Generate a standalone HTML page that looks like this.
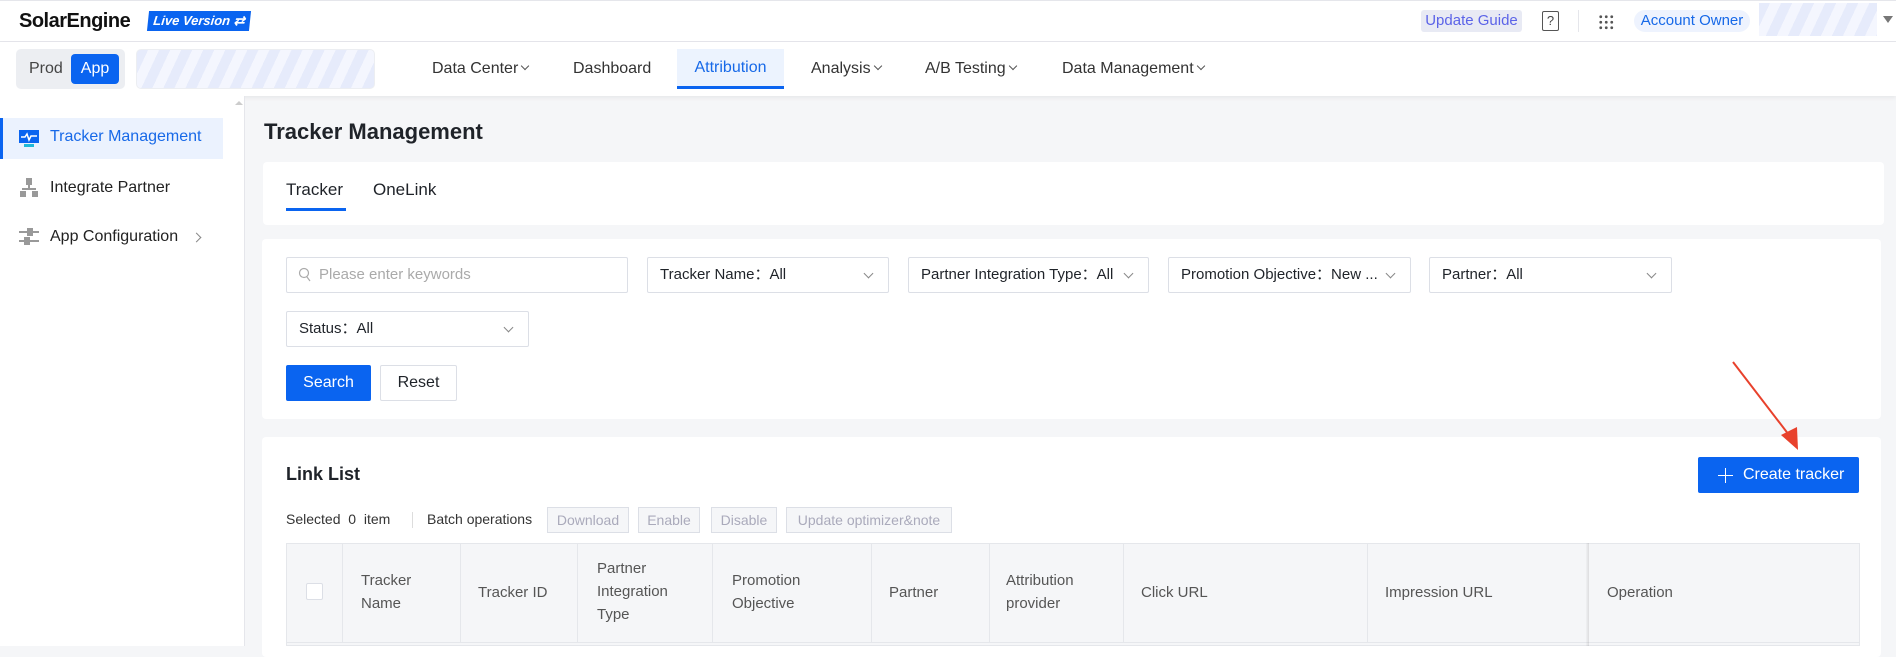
<!DOCTYPE html>
<html><head><meta charset="utf-8"><style>
*{box-sizing:border-box;margin:0;padding:0}
body{width:1896px;height:646px;overflow:hidden;background:#f5f6f8;font-family:"Liberation Sans",sans-serif;color:#1f2329;position:relative}
.a{position:absolute}
.stripe{background:repeating-linear-gradient(115deg,#e6ebfb 0 10px,#f4f6fe 10px 20px)}
.sel{position:absolute;height:36px;border:1px solid #dcdfe6;background:#fff;border-radius:2px;font-size:15px;line-height:34px;padding-left:12px;color:#1f2329}
.sel.dd:after{content:"";position:absolute;right:16px;top:12px;width:6px;height:6px;border-right:1px solid #888;border-bottom:1px solid #888;transform:rotate(45deg)}
.nav{position:absolute;top:49px;height:40px;line-height:40px;font-size:16px;color:#333}
.chev{display:inline-block;width:6px;height:6px;border-right:1px solid #555;border-bottom:1px solid #555;transform:rotate(45deg);margin:0 0 4px 4px}
.bb{position:absolute;top:507px;height:26px;border:1px solid #dcdfe6;background:#f5f6f8;color:#aab;font-size:14px;line-height:24px;text-align:center}
.th{position:absolute;font-size:15px;color:#555;line-height:23px}
.vl{position:absolute;top:543px;width:1px;height:100px;background:#e5e7eb}
</style></head><body>
<div class="a" style="left:0;top:0;width:1896px;height:42px;background:#fff;border-bottom:1px solid #e5e6eb;border-top:1px solid #e5e6eb"></div>
<div class="a" style="left:19px;top:10px;font-size:20px;font-weight:bold;letter-spacing:-0.5px;color:#111">SolarEngine</div>
<div class="a" style="left:148px;top:11px;width:102px;height:20px;background:#0a64f0;color:#fff;font-size:13px;font-style:italic;font-weight:bold;line-height:20px;text-align:center;transform:skewX(-6deg)">Live Version ⇄</div>
<div class="a" style="left:1421px;top:10px;width:101px;height:22px;background:#e8eaf4;border-radius:3px;color:#5b63e8;font-size:15px;line-height:22px;text-align:center">Update Guide</div>
<div class="a" style="left:1542px;top:11px;width:17px;height:20px;border:1.5px solid #555;border-radius:2px;font-size:13px;line-height:17px;text-align:center;color:#444">?</div>
<div class="a" style="left:1578px;top:10px;width:1px;height:22px;background:#e5e6eb"></div>
<div class="a" style="left:1598px;top:14px;width:16px;height:16px;background:radial-gradient(circle,#555 1.3px,transparent 1.6px) 0 0/5.5px 5.5px"></div>
<div class="a" style="left:1634px;top:10px;width:116px;height:22px;background:#eef3fe;border-radius:11px;color:#1769e8;font-size:15px;line-height:22px;text-align:center">Account Owner</div>
<div class="a stripe" style="left:1759px;top:3px;width:118px;height:33px"></div>
<div class="a" style="left:1883px;top:16px;border-left:5px solid transparent;border-right:5px solid transparent;border-top:7px solid #777"></div>
<div class="a" style="left:0;top:42px;width:1896px;height:54px;background:#fff;box-shadow:0 2px 4px rgba(0,0,0,.06)"></div>
<div class="a" style="left:16px;top:49px;width:109px;height:40px;background:#eceef2;border-radius:5px"></div>
<div class="a" style="left:29px;top:54px;font-size:16px;line-height:30px;color:#444">Prod</div>
<div class="a" style="left:71px;top:54px;width:48px;height:30px;background:#0a64f0;border-radius:4px;color:#fff;font-size:16px;line-height:30px;text-align:center">App</div>
<div class="a stripe" style="left:136px;top:49px;width:239px;height:40px;border-radius:5px;border:1px solid #eceef2"></div>
<div class="nav" style="left:432px">Data Center<span class="chev"></span></div>
<div class="nav" style="left:573px">Dashboard</div>
<div class="nav" style="left:677px;width:107px;background:#ecf3fe;color:#1769e8;text-align:center;border-bottom:3px solid #0a64f0;line-height:38px">Attribution</div>
<div class="nav" style="left:811px">Analysis<span class="chev"></span></div>
<div class="nav" style="left:925px">A/B Testing<span class="chev"></span></div>
<div class="nav" style="left:1062px">Data Management<span class="chev"></span></div>
<div class="a" style="left:0;top:96px;width:245px;height:550px;background:#fff;border-right:1px solid #e5e6eb"></div>
<div class="a" style="left:235px;top:101px;border-left:4px solid transparent;border-right:4px solid transparent;border-bottom:4px solid #ccc"></div>
<div class="a" style="left:0;top:118px;width:223px;height:41px;background:#ebf2fe;border-left:3px solid #0a64f0"></div>
<svg class="a" style="left:19px;top:129px" width="20" height="20" viewBox="0 0 20 20"><rect x="0" y="1" width="20" height="13" fill="#0a64f0"/><polyline points="2,8 6,8 8,5 10,11 12,7 18,7" fill="none" stroke="#fff" stroke-width="1.5"/><rect x="5" y="15" width="10" height="3" fill="#1fb8d8"/></svg>
<div class="a" style="left:50px;top:128px;font-size:16px;color:#1769e8">Tracker Management</div>
<svg class="a" style="left:19px;top:178px" width="20" height="20" viewBox="0 0 20 20" fill="#999"><rect x="7" y="0" width="6" height="7"/><rect x="9" y="7" width="2" height="4"/><rect x="3" y="10" width="14" height="2"/><rect x="1" y="13" width="6" height="6"/><rect x="13" y="13" width="6" height="6"/></svg>
<div class="a" style="left:50px;top:179px;font-size:16px;color:#222">Integrate Partner</div>
<svg class="a" style="left:19px;top:228px" width="20" height="18" viewBox="0 0 20 18" fill="#999"><rect x="0" y="3" width="20" height="2"/><rect x="8" y="0" width="6" height="8"/><rect x="0" y="12" width="20" height="2"/><rect x="5" y="9" width="6" height="8"/></svg>
<div class="a" style="left:50px;top:228px;font-size:16px;color:#222">App Configuration</div>
<div class="a" style="left:193px;top:234px;width:7px;height:7px;border-right:1px solid #888;border-top:1px solid #888;transform:rotate(45deg)"></div>
<div class="a" style="left:264px;top:119px;font-size:22px;font-weight:bold;color:#1f2329">Tracker Management</div>
<div class="a" style="left:263px;top:162px;width:1621px;height:63px;background:#fff;border-radius:4px"></div>
<div class="a" style="left:286px;top:180px;font-size:17px">Tracker</div>
<div class="a" style="left:286px;top:208px;width:60px;height:3px;background:#0a64f0"></div>
<div class="a" style="left:373px;top:180px;font-size:17px">OneLink</div>
<div class="a" style="left:262px;top:239px;width:1619px;height:180px;background:#fff;border-radius:4px"></div>
<div class="sel" style="left:286px;top:257px;width:342px;color:#aaa;padding-left:32px">Please enter keywords</div>
<svg class="a" style="left:298px;top:267px" width="14" height="16" viewBox="0 0 14 16"><circle cx="6" cy="6" r="4.5" fill="none" stroke="#aaa" stroke-width="1.2"/><line x1="9" y1="10" x2="12" y2="14" stroke="#aaa" stroke-width="1.2"/></svg>
<div class="sel dd" style="left:647px;top:257px;width:242px">Tracker Name：All</div>
<div class="sel dd" style="left:908px;top:257px;width:241px">Partner Integration Type：All</div>
<div class="sel dd" style="left:1168px;top:257px;width:243px">Promotion Objective：New ...</div>
<div class="sel dd" style="left:1429px;top:257px;width:243px">Partner：All</div>
<div class="sel dd" style="left:286px;top:311px;width:243px">Status：All</div>
<div class="a" style="left:286px;top:365px;width:85px;height:36px;background:#0a64f0;border-radius:2px;color:#fff;font-size:16px;line-height:36px;text-align:center">Search</div>
<div class="a" style="left:380px;top:365px;width:77px;height:36px;border:1px solid #dcdfe6;border-radius:2px;font-size:16px;line-height:34px;text-align:center;background:#fff">Reset</div>
<div class="a" style="left:262px;top:437px;width:1619px;height:220px;background:#fff;border-radius:4px"></div>
<div class="a" style="left:286px;top:464px;font-size:18px;font-weight:bold">Link List</div>
<div class="a" style="left:1698px;top:457px;width:161px;height:36px;background:#0a64f0;border-radius:2px;color:#fff;font-size:16px;line-height:36px;padding-left:45px">Create tracker</div>
<div class="a" style="left:1718px;top:474.5px;width:15px;height:1.5px;background:#fff"></div>
<div class="a" style="left:1724.8px;top:467.5px;width:1.5px;height:15px;background:#fff"></div>
<svg class="a" style="left:1725px;top:355px" width="80" height="100"><line x1="8" y1="7" x2="64" y2="80" stroke="#e8412c" stroke-width="2"/><polygon points="56,80 72,72 73,95" fill="#e8412c"/></svg>
<div class="a" style="left:286px;top:511px;font-size:14px;color:#333">Selected&nbsp;&nbsp;0&nbsp;&nbsp;item</div>
<div class="a" style="left:412px;top:512px;width:1px;height:16px;background:#ddd"></div>
<div class="a" style="left:427px;top:511px;font-size:14px;color:#333">Batch operations</div>
<div class="bb" style="left:547px;width:82px">Download</div>
<div class="bb" style="left:638px;width:62px">Enable</div>
<div class="bb" style="left:711px;width:66px">Disable</div>
<div class="bb" style="left:786px;width:166px">Update optimizer&amp;note</div>
<div class="a" style="left:286px;top:543px;width:1574px;height:103px;background:#f5f6f8;border:1px solid #e5e7eb"></div>
<div class="a" style="left:286px;top:642px;width:1574px;height:1px;background:#e5e7eb"></div>
<div class="vl" style="left:342px"></div><div class="vl" style="left:460px"></div><div class="vl" style="left:577px"></div><div class="vl" style="left:712px"></div><div class="vl" style="left:871px"></div><div class="vl" style="left:989px"></div><div class="vl" style="left:1123px"></div><div class="vl" style="left:1367px"></div>
<div class="a" style="left:1586px;top:543px;width:3px;height:103px;background:linear-gradient(90deg,rgba(0,0,0,.02),rgba(0,0,0,.1))"></div>
<div class="a" style="left:306px;top:583px;width:17px;height:17px;background:#fff;border:1px solid #dcdfe6;border-radius:2px"></div>
<div class="th" style="left:361px;top:569px">Tracker<br>Name</div>
<div class="th" style="left:478px;top:581px">Tracker ID</div>
<div class="th" style="left:597px;top:557px">Partner<br>Integration<br>Type</div>
<div class="th" style="left:732px;top:569px">Promotion<br>Objective</div>
<div class="th" style="left:889px;top:581px">Partner</div>
<div class="th" style="left:1006px;top:569px">Attribution<br>provider</div>
<div class="th" style="left:1141px;top:581px">Click URL</div>
<div class="th" style="left:1385px;top:581px">Impression URL</div>
<div class="th" style="left:1607px;top:581px">Operation</div>
</body></html>
